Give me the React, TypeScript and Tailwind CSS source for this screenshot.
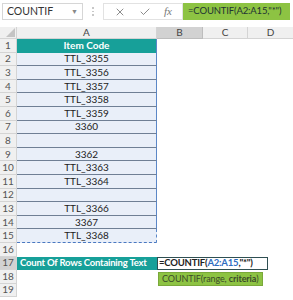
import { X, Check } from "lucide-react";

const items = [
  "TTL_3355",
  "TTL_3356",
  "TTL_3357",
  "TTL_3358",
  "TTL_3359",
  "3360",
  "",
  "3362",
  "TTL_3363",
  "TTL_3364",
  "",
  "TTL_3366",
  "3367",
  "TTL_3368",
];

function RowHead({ n, active }: { n: number; active?: boolean }) {
  return (
    <div
      className={`w-[17px] shrink-0 flex items-center justify-center border-r border-b border-[#d4d4d4] text-[10px] text-[#555] ${
        active ? "bg-[#d2d2d2]" : "bg-[#f0f0f0]"
      }`}
    >
      {n}
    </div>
  );
}

export default function App() {
  return (
    <div className="w-[293px] h-[300px] overflow-hidden bg-white font-['Lato',sans-serif] text-[#222]">
      {/* Formula bar */}
      <div className="h-[27px] flex items-start pt-[3px] bg-white">
        <div className="ml-[2px] w-[81px] h-[17px] border border-[#d6d6d6] bg-white flex items-center justify-between pl-[4px] pr-[4px]">
          <span className="text-[10.5px] text-[#333]">COUNTIF</span>
          <span className="text-[7px] text-[#888]">▼</span>
        </div>
        <div className="w-[20px] h-[17px] flex flex-col items-center justify-center gap-[2px]">
          <span className="w-[1.5px] h-[1.5px] bg-[#c8c8c8]" />
          <span className="w-[1.5px] h-[1.5px] bg-[#c8c8c8]" />
          <span className="w-[1.5px] h-[1.5px] bg-[#c8c8c8]" />
        </div>
        <div className="w-[80px] h-[17px] border border-[#e2e2e2] flex items-center pl-[10px] gap-[13px] text-[#666]">
          <X size={12} strokeWidth={1.5} />
          <Check size={12} strokeWidth={1.5} />
          <span className="font-['Liberation_Serif',serif] italic text-[11px] text-[#777]">fx</span>
        </div>
        <div className="w-[107px] h-[17px] bg-[#8dc343] flex items-center pl-[5px] text-[9.5px] tracking-[-0.15px] text-[#233] whitespace-nowrap">
          =COUNTIF(A2:A15,"*")
        </div>
      </div>

      {/* Column header */}
      <div className="h-[12px] flex text-[10px] text-[#444]">
        <div className="w-[17px] bg-[#f0f0f0] border-r border-b border-[#d4d4d4] relative overflow-hidden">
          <div className="absolute right-[1px] bottom-[1px] w-0 h-0 border-l-[9px] border-l-transparent border-b-[9px] border-b-[#c4c4c4]" />
        </div>
        <div className="w-[140px] bg-[#f0f0f0] border-r border-b border-[#d4d4d4] flex items-center justify-center">A</div>
        <div className="w-[46px] bg-[#d2d2d2] border-r border-b border-[#bdbdbd] flex items-center justify-center">B</div>
        <div className="w-[45px] bg-[#f0f0f0] border-r border-b border-[#d4d4d4] flex items-center justify-center">C</div>
        <div className="flex-1 bg-[#f0f0f0] border-b border-[#d4d4d4] flex items-center justify-center">D</div>
      </div>

      {/* Row 1 */}
      <div className="h-[13.6px] flex">
        <RowHead n={1} />
        <div className="w-[140px] bg-[#17a099] border-r border-[#5b87c7] flex items-center justify-center text-white font-bold text-[10px]">
          Item Code
        </div>
      </div>

      {/* Rows 2-15 */}
      {items.map((v, i) => (
        <div key={i} className="h-[13.6px] flex">
          <RowHead n={i + 2} />
          <div
            className={`w-[140px] bg-[#e9eff9] border-r border-r-[#5b87c7] border-b flex items-center justify-center text-[10px] ${
              i === items.length - 1 ? "border-dashed border-b-[#4a78c0]" : "border-b-[#6f7f95]"
            }`}
          >
            {v}
          </div>
        </div>
      ))}

      {/* Row 16 */}
      <div className="h-[13.6px] flex">
        <RowHead n={16} />
      </div>

      {/* Row 17 */}
      <div className="h-[13.6px] flex relative">
        <RowHead n={17} active />
        <div className="w-[140px] bg-[#17a099] flex items-center pl-[3px] text-white font-bold text-[9.5px] tracking-[-0.2px] whitespace-nowrap overflow-hidden">
          Count Of Rows Containing Text
        </div>
        <div className="w-[111px] border-[1.5px] border-[#2f4f52] bg-white flex items-center pl-[1px] text-[9.5px] tracking-[-0.2px] font-bold whitespace-nowrap">
          =COUNTIF(<span className="text-[#2e6cc0]">A2:A15</span>,"*")
        </div>
        {/* Argument tooltip */}
        <div className="absolute left-[158px] top-[15px] h-[14px] px-[3px] bg-[#8dc343] border border-[#7aa83a] flex items-center text-[9px] tracking-[-0.1px] text-[#3b4a2a] whitespace-nowrap">
          COUNTIF(range,&nbsp;<span className="font-bold">criteria</span>)
        </div>
      </div>

      {/* Rows 18-19 */}
      <div className="h-[13.6px] flex">
        <RowHead n={18} />
      </div>
      <div className="h-[13.6px] flex">
        <RowHead n={19} />
      </div>
    </div>
  );
}
